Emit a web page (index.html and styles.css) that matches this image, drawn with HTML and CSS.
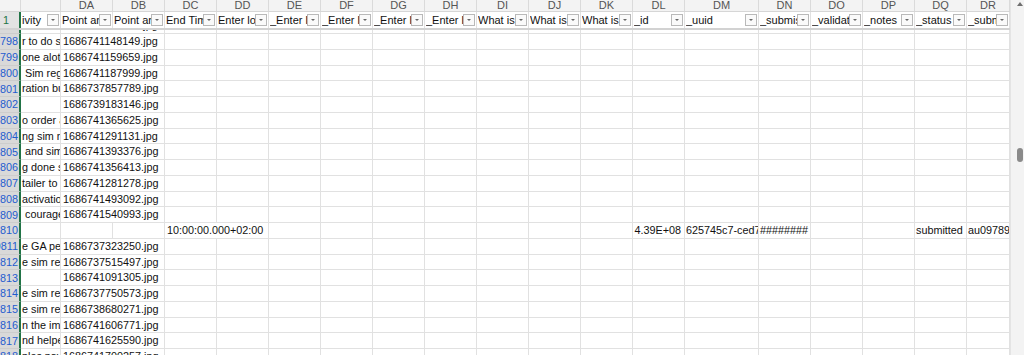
FILE: index.html
```html
<!DOCTYPE html>
<html lang="en">
<head>
  <meta charset="UTF-8" />
  <title>Sheet</title>
  <link rel="stylesheet" href="styles.css">
</head>
<body>
  <div class="window">
    <div class="sheet">
      <div class="letters grid" id="letters"></div>
      <div class="head-row grid" id="headRow"></div>
      <div class="body">
        <div class="rows" id="rows"></div>
      </div>
    </div>
    <div class="vscroll">
      <span class="arrow-up"></span>
      <span class="thumb"></span>
    </div>
  </div>

  <script>
    // Column letters and the frozen header row
    const letters = ['', '', 'DA', 'DB', 'DC', 'DD', 'DE', 'DF', 'DG', 'DH', 'DI', 'DJ', 'DK', 'DL', 'DM', 'DN', 'DO', 'DP', 'DQ', 'DR'];
    const heads = ['ivity', 'Point and click', 'Point and click', 'End Time', 'Enter location',
      '_Enter location', '_Enter location', '_Enter location', '_Enter location',
      'What is the', 'What is the', 'What is the', '_id', '_uuid', '_submission_time',
      '_validation_status', '_notes', '_status', '_submitted_by'];

    // Visible rows: number, activity (scrolled), photo file
    const rows = [
      ['9797', 'sh nav', '1686741130532.jpg'],
      ['9798', 'r to do sim', '1686741148149.jpg'],
      ['9799', 'one alot', '1686741159659.jpg'],
      ['9800', ' Sim reg', '1686741187999.jpg'],
      ['9801', 'ration bu', '1686737857789.jpg'],
      ['9802', '', '1686739183146.jpg'],
      ['9803', 'o order a', '1686741365625.jpg'],
      ['9804', 'ng sim r', '1686741291131.jpg'],
      ['9805', ' and sim', '1686741393376.jpg'],
      ['9806', 'g done s', '1686741356413.jpg'],
      ['9807', 'tailer to', '1686741281278.jpg'],
      ['9808', 'activatio', '1686741493092.jpg'],
      ['9809', ' courage', '1686741540993.jpg'],
      ['9810', null, null],
      ['9811', 'e GA per', '1686737323250.jpg'],
      ['9812', 'e sim re', '1686737515497.jpg'],
      ['9813', '', '1686741091305.jpg'],
      ['9814', 'e sim re', '1686737750573.jpg'],
      ['9815', 'e sim re', '1686738680271.jpg'],
      ['9816', 'n the im', '1686741606771.jpg'],
      ['9817', 'nd helpe', '1686741625590.jpg'],
      ['9818', 'ples pay', '1686741700257.jpg']
    ];

    const lettersEl = document.getElementById('letters');
    letters.forEach(l => {
      const d = document.createElement('div');
      d.className = 'letter';
      d.textContent = l;
      lettersEl.appendChild(d);
    });

    const headRow = document.getElementById('headRow');
    const corner = document.createElement('div');
    corner.className = 'rn rn-head';
    corner.textContent = '1';
    headRow.appendChild(corner);
    heads.forEach(h => {
      const d = document.createElement('div');
      d.className = 'hcell';
      d.innerHTML = `<span class="htext">${h}</span><span class="filter"></span>`;
      headRow.appendChild(d);
    });

    function cell(text, cls) {
      const d = document.createElement('div');
      d.className = 'cell' + (cls ? ' ' + cls : '');
      d.textContent = text || '';
      return d;
    }

    const rowsEl = document.getElementById('rows');
    rows.forEach(([num, act, photo]) => {
      const r = document.createElement('div');
      r.className = 'row grid';
      const rn = document.createElement('div');
      rn.className = 'rn';
      rn.innerHTML = `<span>${num}</span>`;
      r.appendChild(rn);

      if (act === null) {
        // the one submitted record
        r.appendChild(cell(''));
        r.appendChild(cell(''));
        r.appendChild(cell(''));
        r.appendChild(cell('10:00:00.000+02:00', 'span2'));
        for (let i = 0; i < 7; i++) r.appendChild(cell(''));
        r.appendChild(cell('4.39E+08', 'num'));
        r.appendChild(cell('625745c7-ced7-4b1e'));
        r.appendChild(cell('########'));
        r.appendChild(cell(''));
        r.appendChild(cell(''));
        r.appendChild(cell('submitted'));
        r.appendChild(cell('au09789'));
      } else {
        // file name spills over the empty DB cell
        r.appendChild(cell(act));
        r.appendChild(cell(photo, 'span2'));
        for (let i = 0; i < 16; i++) r.appendChild(cell(''));
      }
      rowsEl.appendChild(r);
    });
  </script>
</body>
</html>
```

FILE: styles.css
```css
:root {
  --grid: #e1e1e1;
  --xl-green: #217346;
  --rn-bg: #d9d9d9;
  --rn-blue: #1f5ccf;
}

* {
  box-sizing: border-box;
}

body {
  margin: 0;
  font-family: 'Liberation Sans', Arial, sans-serif;
  font-size: 10.8px;
  color: #111;
  background: #fff;
}

.window {
  display: flex;
  width: 1024px;
  height: 355px;
  overflow: hidden;
}

.sheet {
  width: 1010px;
  display: flex;
  flex-direction: column;
}

.grid {
  display: grid;
  grid-template-columns: 21px 40px repeat(12, 52px) 74px repeat(4, 52px) 43px;
}

/* column letters */
.letters {
  height: 12px;
  background: #f3f3f3;
  border-bottom: 1px solid #d6d6d6;
}

.letter {
  font-size: 11px;
  line-height: 11px;
  color: #555;
  text-align: center;
  border-right: 1px solid #dadada;
}

/* frozen header row */
.head-row {
  height: 18px;
  border-bottom: 2px solid #d2d2d2;
}

.hcell {
  display: flex;
  align-items: center;
  padding-left: 1px;
  border-right: 1px solid var(--grid);
  overflow: hidden;
}

.htext {
  flex: 1;
  white-space: nowrap;
  overflow: hidden;
  font-size: 11px;
}

.filter {
  flex: none;
  width: 12px;
  height: 12px;
  margin-right: 1px;
  border: 1px solid #b9b9b9;
  background: #fafafa;
  display: flex;
  align-items: center;
  justify-content: center;
}

.filter::after {
  content: '';
  border-left: 2.5px solid transparent;
  border-right: 2.5px solid transparent;
  border-top: 2.5px solid #666;
}

/* row numbers */
.rn {
  background: var(--rn-bg);
  border-right: 2px solid var(--xl-green);
  border-bottom: 1px solid #cdcdcd;
  display: flex;
  justify-content: flex-end;
  align-items: center;
  overflow: hidden;
  color: var(--rn-blue);
  padding-right: 1px;
  white-space: nowrap;
}

.rn-head {
  justify-content: flex-start;
  padding-left: 3px;
  color: var(--xl-green);
  background: #e3e3e3;
  border-bottom: none;
}

/* body rows */
.body {
  flex: 1;
  overflow: hidden;
}

.rows {
  margin-top: -11.75px;
}

.row {
  height: 15.75px;
}

.cell {
  border-right: 1px solid var(--grid);
  border-bottom: 1px solid var(--grid);
  padding-left: 1px;
  line-height: 14.75px;
  white-space: pre;
  overflow: hidden;
}

.cell.span2 {
  grid-column: span 2;
  padding-left: 2px;
}

.cell.num {
  text-align: right;
  padding-right: 3px;
}

/* vertical scrollbar */
.vscroll {
  width: 14px;
  background: #f3f3f3;
  border-left: 1px solid #e4e4e4;
  padding-left: 4px;
  display: flex;
  flex-direction: column;
  align-items: center;
}

.arrow-up {
  margin-top: 2px;
  border-left: 3px solid transparent;
  border-right: 3px solid transparent;
  border-bottom: 4px solid #6f6f6f;
}

.thumb {
  margin-top: 142px;
  width: 6px;
  height: 14px;
  border-radius: 3px;
  background: #8a8a8a;
}
```
